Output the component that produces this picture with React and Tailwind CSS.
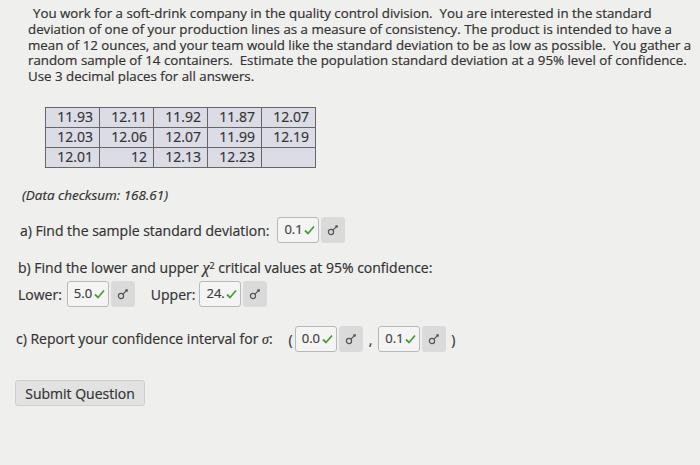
import React from "react";

const font = { fontFamily: '"Open Sans", "DejaVu Sans", sans-serif' };

function Key() {
  return (
    <span className="inline-flex h-[26px] w-[24px] items-center justify-center rounded-[3px] bg-[#dadada]">
      <svg width="12" height="12" viewBox="0 0 12 12" fill="none" stroke="#555" strokeWidth="1.2">
        <circle cx="4" cy="8" r="2.6" />
        <path d="M5.9 6.1 L10.2 1.8" />
        <path d="M8.2 2 L10.2 1.8 L10 3.8" fill="#555" />
      </svg>
    </span>
  );
}

function Answer({ value }) {
  return (
    <span className="inline-flex items-center gap-[2px]">
      <span className="inline-flex h-[26px] w-[42px] items-center justify-between rounded-[3px] border border-[#b9b9b9] bg-[#f4f4f4] pl-[6px] pr-[3px] text-[13px] text-[#444]">
        <span>{value}</span>
        <svg width="11" height="10" viewBox="0 0 11 10" fill="none" stroke="#4f9a3c" strokeWidth="1.8">
          <path d="M1 5.5 L4 8.5 L10 1.5" />
        </svg>
      </span>
      <Key />
    </span>
  );
}

const rows = [
  ["11.93", "12.11", "11.92", "11.87", "12.07"],
  ["12.03", "12.06", "12.07", "11.99", "12.19"],
  ["12.01", "12", "12.13", "12.23", ""],
];

export default function App() {
  return (
    <div className="h-[465px] w-[700px] overflow-hidden bg-[#efefed] text-[#333] [-webkit-text-stroke:0.2px_#333]" style={font}>
      <div className="px-[28px] pt-[6px] text-[13.3px] leading-[15.8px]">
        <div className="whitespace-pre pl-[5px]">You work for a soft-drink company in the quality control division.  You are interested in the standard</div>
        <div className="whitespace-pre">deviation of one of your production lines as a measure of consistency. The product is intended to have a</div>
        <div className="whitespace-pre">mean of 12 ounces, and your team would like the standard deviation to be as low as possible.  You gather a</div>
        <div className="whitespace-pre">random sample of 14 containers.  Estimate the population standard deviation at a 95% level of confidence.</div>
        <div className="whitespace-pre">Use 3 decimal places for all answers.</div>
      </div>

      <div className="ml-[45px] mt-[22px] w-[271px]">
        <table className="w-full border-collapse text-[14px] text-[#333]">
          <tbody>
            {rows.map((r, i) => (
              <tr key={i} className="h-[20px]">
                {r.map((c, j) => (
                  <td key={j} className="w-[54px] border border-[#666] bg-[#dcdce6] px-[6px] py-0 text-right leading-[18px]">
                    {c}
                  </td>
                ))}
              </tr>
            ))}
          </tbody>
        </table>
      </div>

      <div className="ml-[22px] mt-[17px] text-[13.5px] italic">(Data checksum: 168.61)</div>

      <div className="ml-[20px] mt-[12px] flex items-center gap-[8px] text-[14px]">
        <span>a) Find the sample standard deviation:</span>
        <Answer value="0.1" />
      </div>

      <div className="ml-[18px] mt-[13px] text-[14px]">
        b) Find the lower and upper <span className="font-serif text-[16px] italic">χ</span>
        <sup className="text-[9px]">2</sup> critical values at 95% confidence:
      </div>
      <div className="ml-[18px] mt-[1px] flex items-center text-[14px]">
        <span className="mr-[5px]">Lower:</span>
        <Answer value="5.0" />
        <span className="ml-[16px] mr-[4px]">Upper:</span>
        <Answer value="24." />
      </div>

      <div className="ml-[16px] mt-[19px] flex items-center text-[14px]">
        <span>c) Report your confidence interval for <span className="font-serif italic">σ</span>:</span>
        <span className="ml-[16px] mr-[2px]">(</span>
        <Answer value="0.0" />
        <span className="ml-[6px] mr-[6px]">,</span>
        <Answer value="0.1" />
        <span className="ml-[5px]">)</span>
      </div>

      <button className="ml-[15px] mt-[28px] h-[26px] w-[130px] rounded-[3px] border border-[#cfcfcf] bg-[#e2e2e2] text-[14px] text-[#333]" style={font}>
        Submit Question
      </button>
    </div>
  );
}
